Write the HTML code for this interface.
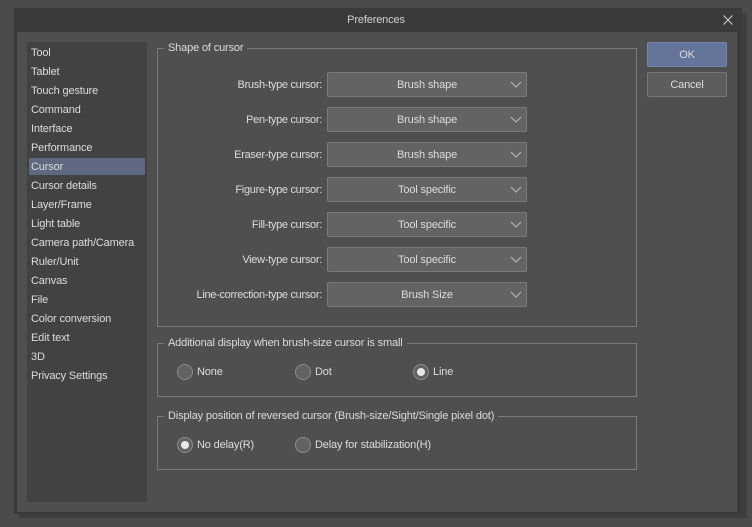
<!DOCTYPE html>
<html><head><style>
*{margin:0;padding:0;box-sizing:border-box}
body{width:752px;height:527px;background:#4b4b4b;position:relative;overflow:hidden;font-family:"Liberation Sans",sans-serif;font-size:11px;letter-spacing:-0.15px;color:#dcdcdc}
.a{position:absolute}
.side div{position:absolute;left:2px;width:116px;height:17px;line-height:17px;padding-left:2px}
.grp{position:absolute;border:1px solid #797979}
.grp span{position:absolute;top:-8px;left:6px;background:#4f4f4f;padding:0 4px;line-height:15px}
.lbl{position:absolute;right:430px;width:200px;text-align:right;letter-spacing:-0.3px}
.dd{position:absolute;left:327px;width:200px;height:25px;background:#636363;border:1px solid #7a7a7a;border-radius:2px;text-align:center;line-height:24px}
.dd svg{position:absolute;right:4px;top:8px}
.rad{position:absolute;width:16px;height:16px;border-radius:50%;background:#626262;border:1px solid #8a8a8a}
.rad.on::after{content:"";position:absolute;left:3px;top:3px;width:8px;height:8px;border-radius:50%;background:#e8e8e8}
.rt{position:absolute;line-height:15px}
</style></head><body>
<div class="a" style="left:19px;top:13px;width:728px;height:505px;background:#3e3e3e"></div>
<div class="a" style="left:14px;top:8px;width:728px;height:506px;background:#3a3a3a"></div>
<div class="a" style="left:0;top:14px;width:752px;text-align:center;color:#d0d0d0">Preferences</div>
<svg class="a" style="left:723px;top:15px" width="10" height="10"><path d="M0.5 0.5L9.5 9.5M9.5 0.5L0.5 9.5" stroke="#cfcfcf" stroke-width="1.1"/></svg>
<div class="a" style="left:17px;top:32px;width:720px;height:480px;background:#4f4f4f"></div>
<div class="a side" style="left:27px;top:42px;width:120px;height:460px;background:#424242">
<div style="top:3px">Tool</div><div style="top:22px">Tablet</div><div style="top:41px">Touch gesture</div><div style="top:60px">Command</div><div style="top:79px">Interface</div><div style="top:98px">Performance</div><div style="top:116px;background:#5e6880;border-radius:1px;line-height:18px">Cursor</div><div style="top:136px">Cursor details</div><div style="top:155px">Layer/Frame</div><div style="top:174px">Light table</div><div style="top:193px">Camera path/Camera</div><div style="top:212px">Ruler/Unit</div><div style="top:231px">Canvas</div><div style="top:250px">File</div><div style="top:269px">Color conversion</div><div style="top:288px">Edit text</div><div style="top:307px">3D</div><div style="top:326px">Privacy Settings</div>
</div>
<div class="grp" style="left:157px;top:48px;width:480px;height:279px"><span>Shape of cursor</span></div>
<div class="lbl" style="top:79px">Brush-type cursor:</div><div class="dd" style="top:72px">Brush shape<svg width="12" height="8"><path d="M1 1L6 6L11 1" stroke="#bbb" fill="none"/></svg></div>
<div class="lbl" style="top:114px">Pen-type cursor:</div><div class="dd" style="top:107px">Brush shape<svg width="12" height="8"><path d="M1 1L6 6L11 1" stroke="#bbb" fill="none"/></svg></div>
<div class="lbl" style="top:149px">Eraser-type cursor:</div><div class="dd" style="top:142px">Brush shape<svg width="12" height="8"><path d="M1 1L6 6L11 1" stroke="#bbb" fill="none"/></svg></div>
<div class="lbl" style="top:184px">Figure-type cursor:</div><div class="dd" style="top:177px">Tool specific<svg width="12" height="8"><path d="M1 1L6 6L11 1" stroke="#bbb" fill="none"/></svg></div>
<div class="lbl" style="top:219px">Fill-type cursor:</div><div class="dd" style="top:212px">Tool specific<svg width="12" height="8"><path d="M1 1L6 6L11 1" stroke="#bbb" fill="none"/></svg></div>
<div class="lbl" style="top:254px">View-type cursor:</div><div class="dd" style="top:247px">Tool specific<svg width="12" height="8"><path d="M1 1L6 6L11 1" stroke="#bbb" fill="none"/></svg></div>
<div class="lbl" style="top:289px">Line-correction-type cursor:</div><div class="dd" style="top:282px">Brush Size<svg width="12" height="8"><path d="M1 1L6 6L11 1" stroke="#bbb" fill="none"/></svg></div>
<div class="grp" style="left:157px;top:343px;width:480px;height:54px"><span>Additional display when brush-size cursor is small</span></div>
<div class="rad" style="left:177px;top:364px"></div><div class="rt" style="left:197px;top:365px">None</div>
<div class="rad" style="left:295px;top:364px"></div><div class="rt" style="left:315px;top:365px">Dot</div>
<div class="rad on" style="left:413px;top:364px"></div><div class="rt" style="left:433px;top:365px">Line</div>
<div class="grp" style="left:157px;top:416px;width:480px;height:54px"><span>Display position of reversed cursor (Brush-size/Sight/Single pixel dot)</span></div>
<div class="rad on" style="left:177px;top:437px"></div><div class="rt" style="left:197px;top:438px">No delay(R)</div>
<div class="rad" style="left:295px;top:437px"></div><div class="rt" style="left:315px;top:438px">Delay for stabilization(H)</div>
<div class="a" style="left:647px;top:42px;width:80px;height:25px;background:#65749b;border:1px solid #7585ab;border-radius:2px;text-align:center;line-height:24px">OK</div>
<div class="a" style="left:647px;top:72px;width:80px;height:25px;background:#5d5d5d;border:1px solid #767676;border-radius:2px;text-align:center;line-height:24px">Cancel</div>
</body></html>
